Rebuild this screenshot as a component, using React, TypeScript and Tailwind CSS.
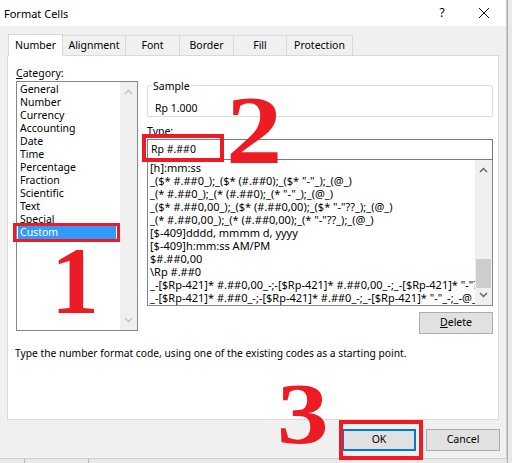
import React from "react";

const categories = [
  "General",
  "Number",
  "Currency",
  "Accounting",
  "Date",
  "Time",
  "Percentage",
  "Fraction",
  "Scientific",
  "Text",
  "Special",
  "Custom",
];

const types = [
  "[h]:mm:ss",
  '_($* #.##0_);_($* (#.##0);_($* "-"_);_(@_)',
  '_(* #.##0_);_(* (#.##0);_(* "-"_);_(@_)',
  '_($* #.##0,00_);_($* (#.##0,00);_($* "-"??_);_(@_)',
  '_(* #.##0,00_);_(* (#.##0,00);_(* "-"??_);_(@_)',
  "[$-409]dddd, mmmm d, yyyy",
  "[$-409]h:mm:ss AM/PM",
  "$#.##0,00",
  "\\Rp #.##0",
  '_-[$Rp-421]* #.##0,00_-;-[$Rp-421]* #.##0,00_-;_-[$Rp-421]* "-"??_-;_-@_-',
  '_-[$Rp-421]* #.##0_-;-[$Rp-421]* #.##0_-;_-[$Rp-421]* "-"_-;_-@_-',
];

const tabs = ["Number", "Alignment", "Font", "Border", "Fill", "Protection"];
const tabW = [55, 63, 54, 54, 53, 66];

function Chevron({ up, color }: { up: boolean; color: string }) {
  return (
    <svg width="9" height="6" viewBox="0 0 9 6">
      <path
        d={up ? "M1 5 L4.5 1.5 L8 5" : "M1 1 L4.5 4.5 L8 1"}
        fill="none"
        stroke={color}
        strokeWidth="1.4"
      />
    </svg>
  );
}

const serif = { fontFamily: '"Liberation Serif", "DejaVu Serif", serif' };

export default function App() {
  const font = { fontFamily: '"Noto Sans", "Open Sans", sans-serif' };
  return (
    <div
      className="relative w-[512px] h-[463px] overflow-hidden bg-[#e9e9e9] text-[10.5px] text-black"
      style={font}
    >
      {/* background grid hint */}
      <div className="absolute left-[24px] top-[459px] w-px h-[4px] bg-[#b0b4bb]" />
      <div className="absolute left-[88px] top-[459px] w-px h-[4px] bg-[#b0b4bb]" />
      <div className="absolute left-[507px] top-0 w-px h-[463px] bg-[#a8acb3]" />

      <div className="relative w-[507px] h-[459px] bg-[#f0f0f0] border-r border-b border-[#cfcfcf] flex flex-col">
        {/* title bar */}
        <div className="h-[26px] bg-white flex items-center pl-[4px] shrink-0">
          <span className="text-[11px] leading-none">Format Cells</span>
          <span className="ml-auto w-[20px] text-center text-[12px] leading-none mr-[26px]">?</span>
          <svg width="12" height="12" viewBox="0 0 12 12" className="mr-[16px]">
            <path d="M1 1 L11 11 M11 1 L1 11" stroke="#111" strokeWidth="1" />
          </svg>
        </div>

        {/* tabs */}
        <div className="flex items-end h-[29px] pl-[8px] shrink-0">
          {tabs.map((t, i) =>
            i === 0 ? (
              <div
                key={t}
                style={{ width: tabW[i] }}
                className="h-[22px] bg-white border border-b-0 border-[#d9d9d9] flex items-center justify-center relative top-px z-10"
              >
                {t}
              </div>
            ) : (
              <div
                key={t}
                style={{ width: tabW[i] }}
                className="h-[20px] bg-[#f0f0f0] border border-l-0 border-b-0 border-[#d9d9d9] flex items-center justify-center pt-[1px]"
              >
                {t}
              </div>
            )
          )}
        </div>

        {/* panel */}
        <div className="ml-[7px] w-[492px] h-[365px] bg-white border border-[#d9d9d9] relative shrink-0">
          <div className="flex">
            {/* left column */}
            <div className="pl-[8px] pt-[10px] w-[137px] shrink-0">
              <div className="leading-[14px] h-[15px]">
                <span className="underline">C</span>ategory:
              </div>
              <div className="w-[122px] h-[250px] border border-[#828790] flex">
                <div className="flex-1 pt-[1px] pl-[1px]">
                  {categories.map((c) => (
                    <div
                      key={c}
                      className={
                        "h-[13px] leading-[13px] pl-[2px] " +
                        (c === "Custom" ? "bg-[#3399ff] text-white w-[98px]" : "")
                      }
                    >
                      {c}
                    </div>
                  ))}
                </div>
                <div className="w-[17px] bg-[#f0f0f0] flex flex-col items-center justify-between py-[7px]">
                  <Chevron up color="#c0c0c0" />
                  <Chevron up={false} color="#c0c0c0" />
                </div>
              </div>
            </div>

            {/* right column */}
            <div className="pl-[2px] pt-[29px] w-[348px]">
              <div className="relative h-[32px] border border-[#dcdcdc] rounded-[2px]">
                <span className="absolute -top-[6px] left-[4px] bg-white px-[1px] leading-[12px]">
                  Sample
                </span>
                <div className="pt-[15px] pl-[7px] leading-[14px]">Rp 1.000</div>
              </div>
              <div className="mt-[7px] leading-[14px] h-[15px]">Type:</div>
              <div className="h-[21px] border border-[#7a7a7a] pl-[3px] leading-[19px]">
                Rp #.##0
              </div>
              <div className="h-[146px] border border-[#828790] border-t-0 flex">
                <div className="flex-1 pt-[1px] pl-[2px] overflow-hidden whitespace-nowrap text-[11px]">
                  {types.map((t) => (
                    <div key={t} className="h-[13px] leading-[13px]">
                      {t}
                    </div>
                  ))}
                </div>
                <div className="w-[17px] bg-[#f0f0f0] flex flex-col items-center py-[7px]">
                  <Chevron up color="#606060" />
                  <div className="mt-auto w-[15px] h-[29px] bg-[#cdcdcd] mb-[4px]" />
                  <Chevron up={false} color="#606060" />
                </div>
              </div>
              <div className="flex justify-end mt-[6px]">
                <div className="w-[74px] h-[22px] bg-[#e1e1e1] border border-[#adadad] flex items-center justify-center">
                  <span className="underline">D</span>elete
                </div>
              </div>
            </div>
          </div>
          <div className="pl-[7px] mt-[12px] leading-[14px] text-[10.25px]">
            Type the number format code, using one of the existing codes as a starting point.
          </div>
        </div>

        {/* buttons */}
        <div className="flex justify-end gap-[10px] pr-[6px] pt-[9px]">
          <div className="w-[74px] h-[22px] bg-[#e1e1e1] border-2 border-[#0078d7] flex items-center justify-center">
            OK
          </div>
          <div className="w-[74px] h-[22px] bg-[#e1e1e1] border border-[#adadad] flex items-center justify-center">
            Cancel
          </div>
        </div>
      </div>

      {/* annotations */}
      <div className="absolute left-[13px] top-[223px] w-[107px] h-[19px] border-[3px] border-[#ed1c24]" />
      <div className="absolute left-[142px] top-[134px] w-[82px] h-[28px] border-[4px] border-[#ed1c24]" />
      <div className="absolute left-[339px] top-[420px] w-[84px] h-[40px] border-[4px] border-[#ed1c24]" />
      <div
        className="absolute left-[51px] top-[233px] text-[96px] leading-none font-bold text-[#ed1c24]"
        style={serif}
      >
        1
      </div>
      <div
        className="absolute left-[226px] top-[81px] text-[98px] leading-none font-bold text-[#ed1c24] origin-left scale-x-[1.15]"
        style={serif}
      >
        2
      </div>
      <div
        className="absolute left-[277px] top-[371px] text-[86px] leading-none font-bold text-[#ed1c24] origin-left scale-x-[1.2]"
        style={serif}
      >
        3
      </div>
    </div>
  );
}
